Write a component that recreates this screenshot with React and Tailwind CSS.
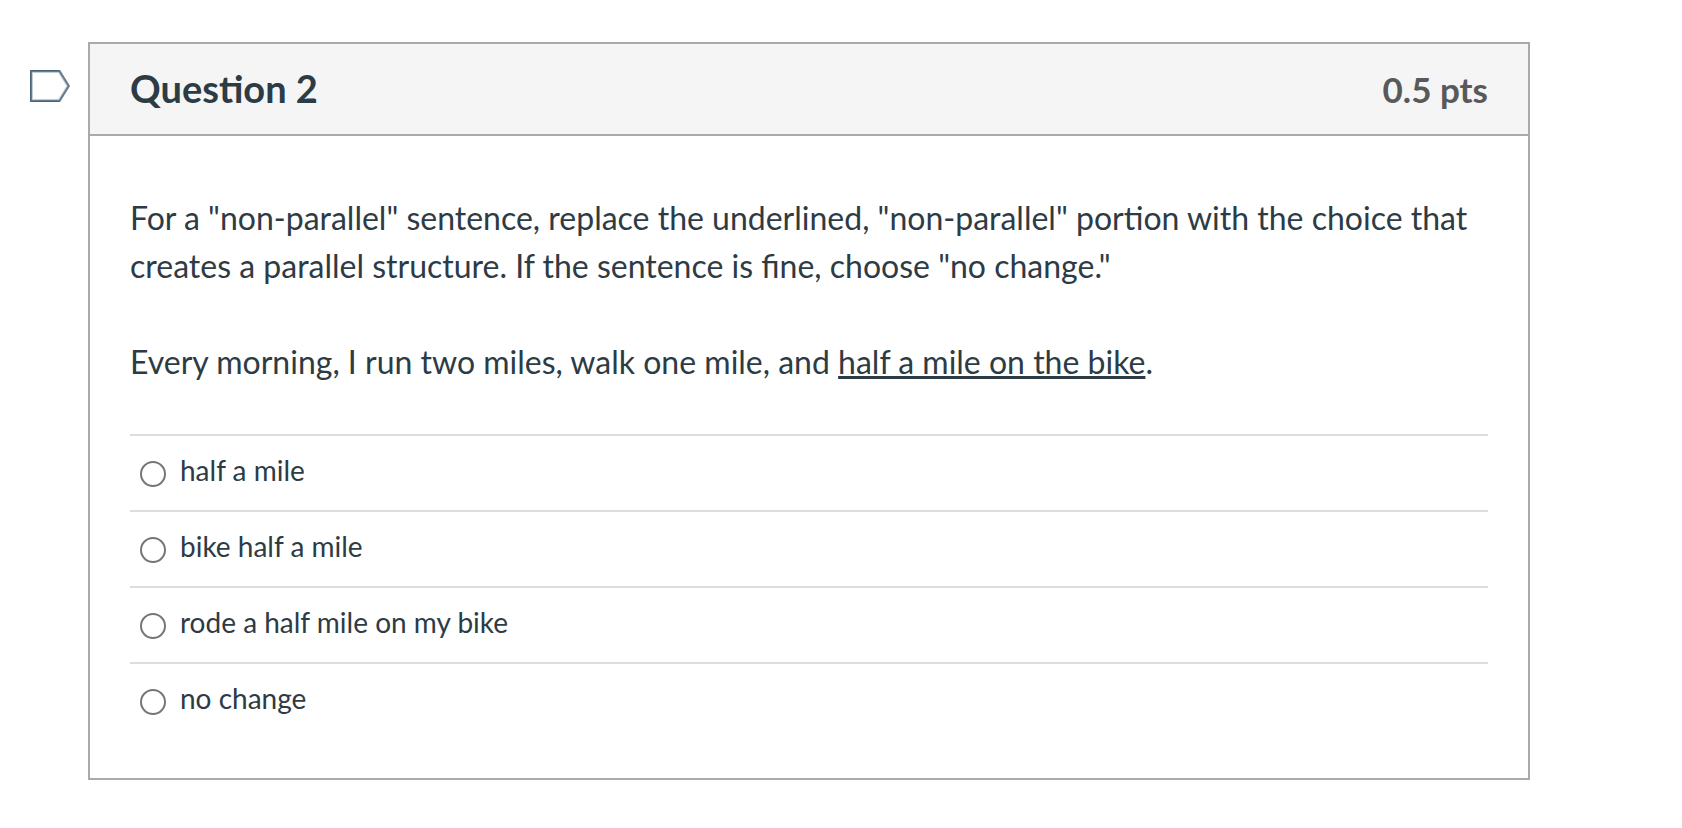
import { useState } from "react";

const CHOICES = [
    "half a mile",
    "bike half a mile",
    "rode a half mile on my bike",
    "no change"
];

function FlagButton() {
    return (
        <button type="button" aria-label="Flag question" className="mt-[70px] h-8 w-10 shrink-0">
            <svg viewBox="0 0 40 32" className="h-8 w-10" fill="none">
                <path d="M1.5 1.5H29.2L38.2 16L29.2 30.5H1.5Z" fill="#fff" stroke="#c3ccd4" strokeWidth="3" />
                <path d="M1 1H29.5L38.8 16L29.5 31H1Z" stroke="#667d90" strokeWidth="2" />
                <path d="M29.5 0.5H0.5V31.5H29.5" stroke="#4a6377" />
            </svg>
        </button>
    );
}

export default function App() {
    const [selected, setSelected] = useState("");

    return (
        <main className="flex items-start gap-[18px] bg-white pr-[152px] pb-12 pl-[30px] font-['Lato',sans-serif] text-[#2d3b45]">
            <FlagButton />

            <section className="mt-[42px] flex-1 border-2 border-[#aaaaaa]">
                {/* HEADER */}
                <header className="flex items-baseline justify-between border-b-2 border-[#aaaaaa] bg-[#f5f5f5] px-10 pt-[14px] pb-4">
                    <h1 className="text-[38px] leading-[60px] font-bold">Question 2</h1>
                    <span className="text-[35px] leading-none font-bold text-[#595959]">0.5 pts</span>
                </header>

                {/* QUESTION */}
                <div className="px-10 pt-[58px] pb-10">
                    <div className="space-y-12 text-[32px] leading-[48px]">
                        <p>
                            For a "non-parallel" sentence, replace the underlined, "non-parallel" portion
                            with the choice that creates a parallel structure. If the sentence is fine,
                            choose "no change."
                        </p>
                        <p>
                            Every morning, I run two miles, walk one mile, and{" "}
                            <span className="underline decoration-[3px]">half a mile on the bike</span>.
                        </p>
                    </div>

                    {/* ANSWERS */}
                    <fieldset aria-label="Answers" className="mt-12">
                        {CHOICES.map((choice) => (
                            <label
                                key={choice}
                                className="flex h-[76px] items-center gap-[14px] border-t-2 border-[#dddddd] pb-1.5 pl-[10px] text-[28px]"
                            >
                                <input
                                    type="radio"
                                    name="answer"
                                    value={choice}
                                    checked={selected === choice}
                                    onChange={() => setSelected(choice)}
                                    className="mt-2 size-[26px] appearance-none rounded-full border-2 border-[#767676] bg-white checked:border-8 checked:border-blue-600"
                                />
                                {choice}
                            </label>
                        ))}
                    </fieldset>
                </div>
            </section>
        </main>
    );
}
